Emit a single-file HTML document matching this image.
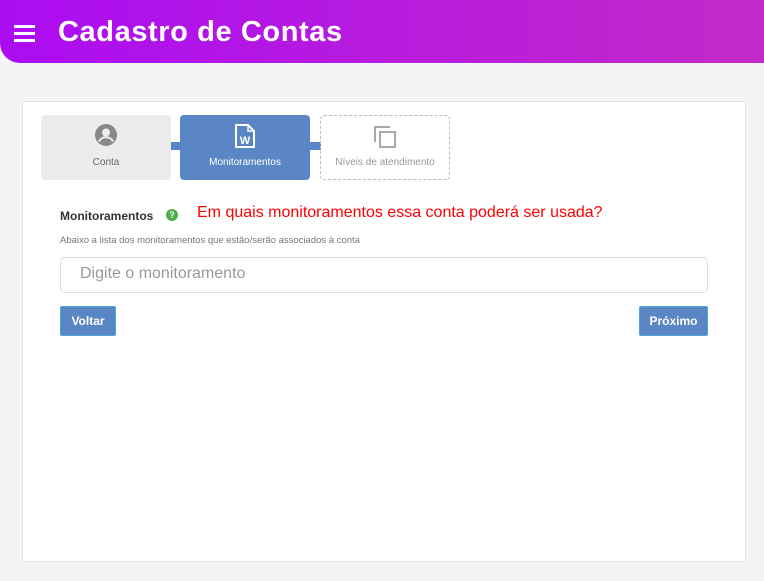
<!DOCTYPE html>
<html><head><meta charset="utf-8"><style>
*{margin:0;padding:0;box-sizing:border-box}
body{width:764px;height:581px;background:#f4f4f4;font-family:"Liberation Sans",Arial,sans-serif;position:relative;overflow:hidden}
.hdr{position:absolute;left:0;top:0;width:764px;height:63px;background:linear-gradient(90deg,#ac0cf2,#c12bc9);border-bottom-left-radius:20px}
.hdr h1{position:absolute;left:58px;top:16px;color:#fff;font-size:29px;font-weight:bold;letter-spacing:0.6px}
.bar{position:absolute;left:14px;width:21px;height:3px;background:#fff}
.card{position:absolute;left:22px;top:101px;width:724px;height:461px;background:#fff;border:1px solid #e2e2e2;border-radius:3px}
.step{position:absolute;top:115px;width:130px;height:65px;border-radius:4px;text-align:center;font-size:10px}
.lbl{position:absolute;left:0;right:0;top:41px}
.line{position:absolute;top:142px;height:8px;background:#5a86c5}
.btn{position:absolute;top:306px;height:30px;background:#5a86c5;border:1px solid #4aa8d8;border-radius:2px;color:#fff;font-size:12px;font-weight:bold;text-align:center;line-height:28px}
</style></head><body>
<div class="hdr"><div class="bar" style="top:25px"></div><div class="bar" style="top:32px"></div><div class="bar" style="top:39px"></div><h1>Cadastro de Contas</h1></div>
<div class="card"></div>
<div class="line" style="left:170px;width:12px"></div>
<div class="line" style="left:309px;width:12px"></div>
<div class="step" style="left:41px;background:#ececec;color:#666">
<svg style="position:absolute;left:54px;top:9px" width="22" height="22" viewBox="0 0 22 22"><circle cx="11" cy="11" r="11" fill="#888"/><circle cx="11" cy="8.5" r="4" fill="#ececec"/><path d="M4 17.5c1.5-3 4-4.2 7-4.2s5.5 1.2 7 4.2" stroke="#ececec" stroke-width="2" fill="none"/></svg>
<div class="lbl" style="top:42px">Conta</div></div>
<div class="step" style="left:180px;background:#5a86c5;color:#fff">
<svg style="position:absolute;left:55px;top:9px" width="20" height="24" viewBox="0 0 20 24"><path d="M1 1h12l6 6v16H1z" fill="none" stroke="#fff" stroke-width="2"/><path d="M13 1v6h6" fill="none" stroke="#fff" stroke-width="1.5"/><text x="10" y="20" text-anchor="middle" fill="#fff" font-size="11" font-weight="bold" font-family="Liberation Sans">W</text></svg>
<div class="lbl" style="top:42px">Monitoramentos</div></div>
<div class="step" style="left:320px;border:1px dashed #bbb;color:#999">
<svg style="position:absolute;left:52px;top:9px" width="24" height="24" viewBox="0 0 24 24"><path d="M2 17V2h15" fill="none" stroke="#aaa" stroke-width="2"/><rect x="7" y="7" width="15" height="15" fill="none" stroke="#aaa" stroke-width="2"/></svg>
<div class="lbl" style="top:41px">Níveis de atendimento</div></div>
<div style="position:absolute;left:60px;top:209px;font-size:12px;font-weight:bold;color:#333">Monitoramentos</div>
<div style="position:absolute;left:166px;top:209px;width:12px;height:12px;border-radius:50%;background:#4cae4c;color:#fff;font-size:9px;font-weight:bold;text-align:center;line-height:12px">?</div>
<div style="position:absolute;left:197px;top:204px;font-size:16px;color:#f00">Em quais monitoramentos essa conta poderá ser usada?</div>
<div style="position:absolute;left:60px;top:235px;font-size:9.5px;color:#777">Abaixo a lista dos monitoramentos que estão/serão associados à conta</div>
<div style="position:absolute;left:60px;top:257px;width:648px;height:36px;border:1px solid #ddd;border-radius:5px;font-size:16px;color:#999;padding:7px 0 0 19px">Digite o monitoramento</div>
<div class="btn" style="left:60px;width:56px">Voltar</div>
<div class="btn" style="left:639px;width:69px">Próximo</div>
</body></html>
